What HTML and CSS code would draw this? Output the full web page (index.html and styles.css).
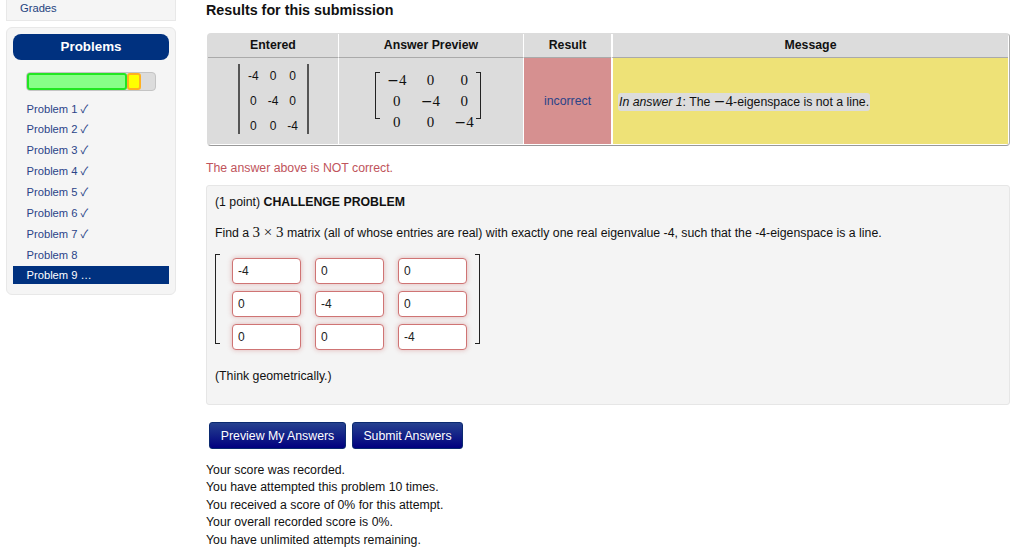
FILE: index.html
```html
<!DOCTYPE html>
<html lang="en">
<head>
<meta charset="utf-8">
<title>Problem 9</title>
<link rel="stylesheet" href="styles.css">
</head>
<body>
<div class="page">
  <aside class="sidebar">
    <div class="panel panel-top"><a class="grades" href="#">Grades</a></div>
    <div class="panel panel-nav">
      <div class="nav-title">Problems</div>
      <div class="progress">
        <div class="bar-green"></div>
        <div class="bar-yellow"></div>
      </div>
      <ul class="problems">
        <li>Problem 1 ✓</li>
        <li>Problem 2 ✓</li>
        <li>Problem 3 ✓</li>
        <li>Problem 4 ✓</li>
        <li>Problem 5 ✓</li>
        <li>Problem 6 ✓</li>
        <li>Problem 7 ✓</li>
        <li>Problem 8</li>
        <li class="active">Problem 9 …</li>
      </ul>
    </div>
  </aside>
  <main class="content">
    <h2 class="results-title">Results for this submission</h2>
    <div class="table-wrap">
      <table class="results">
        <thead>
          <tr><th class="c1">Entered</th><th class="c2">Answer Preview</th><th class="c3">Result</th><th>Message</th></tr>
        </thead>
        <tbody>
          <tr>
            <td class="entered-cell">
              <div class="entered">
                <span>-4</span><span>0</span><span>0</span>
                <span>0</span><span>-4</span><span>0</span>
                <span>0</span><span>0</span><span>-4</span>
              </div>
            </td>
            <td class="preview-cell">
              <div class="preview">
                <span class="bracket bracket-left"></span>
                <div class="preview-grid">
                  <span><span class="minus">−</span>4</span><span>0</span><span>0</span>
                  <span>0</span><span><span class="minus">−</span>4</span><span>0</span>
                  <span>0</span><span>0</span><span><span class="minus">−</span>4</span>
                </div>
                <span class="bracket bracket-right"></span>
              </div>
            </td>
            <td class="result-cell">incorrect</td>
            <td class="message-cell"><span class="message"><em>In answer 1</em>: The <span class="math"><span class="minus">−</span>4</span>-eigenspace is not a line.</span></td>
          </tr>
        </tbody>
      </table>
    </div>
    <p class="verdict">The answer above is NOT correct.</p>
    <section class="problem">
      <p class="problem-head">(1 point) <b>CHALLENGE PROBLEM</b></p>
      <p class="problem-text">Find a <span class="math">3 × 3</span> matrix (all of whose entries are real) with exactly one real eigenvalue -4, such that the -4-eigenspace is a line.</p>
      <div class="matrix">
        <span class="bracket bracket-left tall"></span>
        <div class="matrix-grid">
          <input value="-4"><input value="0"><input value="0">
          <input value="0"><input value="-4"><input value="0">
          <input value="0"><input value="0"><input value="-4">
        </div>
        <span class="bracket bracket-right tall"></span>
      </div>
      <p class="hint">(Think geometrically.)</p>
    </section>
    <div class="buttons">
      <button class="btn-preview">Preview My Answers</button>
      <button class="btn-submit">Submit Answers</button>
    </div>
    <div class="score">
      <div>Your score was recorded.</div>
      <div>You have attempted this problem 10 times.</div>
      <div>You received a score of 0% for this attempt.</div>
      <div>Your overall recorded score is 0%.</div>
      <div>You have unlimited attempts remaining.</div>
    </div>
  </main>
</div>
</body>
</html>
```
FILE: styles.css
```css
* { box-sizing: border-box; }
html, body { margin: 0; padding: 0; height: 554px; overflow: hidden; background: #fff; }
body { font-family: "Liberation Sans", Arial, sans-serif; font-size: 12.3px; color: #111; }
.page { display: flex; align-items: flex-start; height: 554px; padding-left: 6px; }
.sidebar { width: 170px; flex: none; display: flex; flex-direction: column; gap: 6px; }
.panel { background: #f5f5f5; border: 1px solid #e8e8e8; }
.panel-top { height: 21px; border-top: 0; padding-left: 13px; line-height: 16px; }
.grades { color: #24437f; font-size: 11.2px; text-decoration: none; }
.panel-nav { height: 268px; border-radius: 6px; padding: 6px; }
.nav-title { height: 26px; line-height: 25px; border-radius: 8px; background: #00317f; color: #fff; font-weight: bold; font-size: 13.4px; text-align: center; }
.progress { display: flex; width: 130px; height: 19px; margin: 12px 0 0 13px; background: #dcdcdc; border: 1px solid #c4c4c4; border-radius: 4px; }
.bar-green { width: 100px; background: #88ff88; border: 2px solid #22e622; border-radius: 3px; }
.bar-yellow { width: 14px; background: #ffff00; border: 2px solid #ffb020; border-radius: 3px; }
.problems { list-style: none; margin: 7.5px 0 0; padding: 0; }
.problems li { height: 20.9px; line-height: 20.9px; padding-left: 13.5px; font-family: "Liberation Sans", "Noto Sans CJK JP", sans-serif; font-size: 11.2px; color: #2b4488; }
.problems li.active { height: 18px; line-height: 18px; margin-top: 0.5px; color: #fff; background: #00317f; }
.content { width: 804px; margin-left: 30px; flex: none; }
.results-title { margin: 0; font-size: 14.3px; line-height: 18px; font-weight: bold; color: #111; height: 33px; padding-top: 1px; }
.table-wrap { margin-left: 1px; width: 803px; height: 113px; padding: 0 0 1px; border: 1px solid #dcdcdc; border-right-color: #aaa; border-bottom-color: #999; border-radius: 4px; }
.results { width: 800px; height: 110px; border-collapse: separate; border-spacing: 0; table-layout: fixed; }
.results th { height: 24px; background: #dcdcdc; font-size: 12.3px; text-align: center; padding: 0 0 1px; border-left: 1px solid #fff; border-bottom: 1px solid #aaa; color: #111; }
.results th:first-child, .results td:first-child { border-left: 0; }
.results td { padding: 0; background: #dcdcdc; border-left: 1px solid #fff; height: 86px; font-size: 12.3px; vertical-align: middle; }
.results th:nth-child(4), .results td:nth-child(4) { border-left-width: 2px; }
.c1 { width: 130px; }
.c2 { width: 185px; }
.c3 { width: 88px; }
.entered { width: 71px; height: 70px; margin: 0 auto 4px; display: grid; grid-template-columns: repeat(3, 1fr); grid-auto-rows: 25px; align-content: center; align-items: center; justify-items: center; padding: 3px 4px 0; font-size: 12px; border-left: 2px solid #555; border-right: 2px solid #555; }
.preview-cell.preview-cell { padding-right: 6px; }
.preview { display: flex; align-items: flex-start; justify-content: center; }
.preview-grid { width: 101px; display: grid; grid-template-columns: repeat(3, 1fr); grid-auto-rows: 21px; align-items: center; justify-items: center; font-family: "Liberation Serif", serif; font-size: 15px; }
.minus { font-family: "DejaVu Serif", serif; font-size: 14px; }
.bracket { flex: none; width: 5px; height: 47px; margin-top: 2px; border: 1px solid #222; }
.bracket-left { border-right: 0; }
.bracket-right { border-left: 0; margin-left: -5px; }
.bracket.tall { height: 90px; margin-top: 0; }
.result-cell.result-cell { background: #d69090; color: #2b4488; text-align: center; }
.message-cell.message-cell { background: #eee277; padding-left: 5px; }
.message { background: #dcdcdc; border-radius: 3px; padding: 2px 1px; }
.math { font-family: "Liberation Serif", serif; font-size: 15px; }
.verdict { margin: 15px 0 0; height: 18px; line-height: 15px; color: #c0545c; }
.problem { margin-top: 6px; height: 220px; background: #f4f4f4; border: 1px solid #e6e6e6; border-radius: 3px; padding: 0 8px; }
.problem p { margin: 0; }
.problem-head { padding-top: 9px; line-height: 15px; }
.problem-text { margin-top: 15px !important; line-height: 15px; }
.matrix { display: flex; align-items: flex-start; margin-top: 13px; height: 96px; }
.matrix-grid { margin: 4px 8px 0 12px; display: grid; grid-template-columns: repeat(3, 69px); column-gap: 14px; row-gap: 7px; grid-auto-rows: 26px; }
.matrix .bracket-right { margin-left: 0; }
.matrix input { width: 69px; height: 26px; font: 12px "Liberation Sans", sans-serif; color: #222; padding: 0 5px; background: #fff; border: 1px solid #cf7474; border-radius: 4px; box-shadow: 0 0 5px rgba(200, 100, 100, 0.45); }
.hint { margin-top: 19px !important; line-height: 15px; }
.buttons { display: flex; gap: 6px; margin: 17px 0 0 3px; }
.buttons button { height: 27px; padding: 0; font: 12.3px "Liberation Sans", sans-serif; color: #fff; background: linear-gradient(#26418f, #00007f); border: 1px solid #0b2a70; border-radius: 3px; }
.btn-preview { width: 137px; }
.btn-submit { width: 111px; }
.score { margin-top: 12.5px; line-height: 17.5px; color: #111; }
```
